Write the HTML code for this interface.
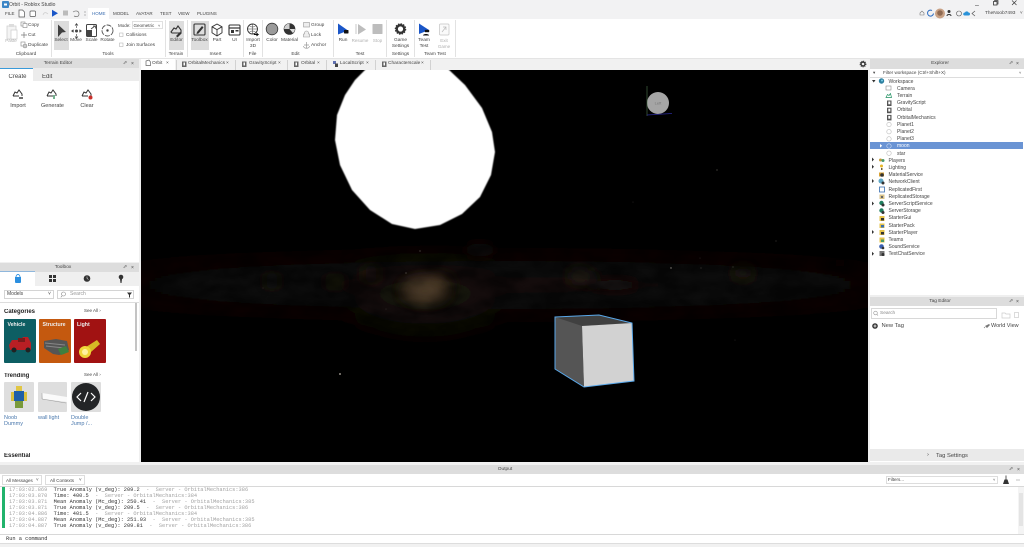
<!DOCTYPE html>
<html><head><meta charset="utf-8"><title>Orbit - Roblox Studio</title>
<style>
html,body{margin:0;padding:0;width:1024px;height:547px;overflow:hidden;background:#fff;font-family:"Liberation Sans",sans-serif;color:#333}
.a{position:absolute}
.t{position:absolute;white-space:nowrap;line-height:1;font-size:5px;color:#444;margin-top:1.500px;filter:blur(.25px)}
.c{transform:translateX(-50%)}
.d{color:#b0b0b0}
.m{font-family:"Liberation Mono",monospace;font-size:5.320px;color:#333;white-space:pre;margin-top:1px}
.g{color:#a2a2a2}
.b{background:#ddd}
.ln{color:#4a78ad;font-size:5.500px}
.h{font-weight:bold;font-size:6px;color:#222}
svg{position:absolute;overflow:visible}
</style></head><body>
<div class="a" style="left:0;top:0;width:1024px;height:19px;background:#f2f2f3"></div>
<svg style="left:2px;top:1px" width="8" height="8"><rect x="0" y="0" width="7" height="7" rx="1" fill="#3d86c6"/><rect x="2" y="2.500" width="3" height="2" fill="#fff"/></svg>
<div class="t" style="left:9px;top:1px">Orbit - Roblox Studio</div>
<div class="t" style="left:975px;top:0;font-size:7px">–</div>
<svg style="left:992px;top:0" width="8" height="7"><rect x="1.500" y="1.500" width="3.500" height="3.500" fill="none" stroke="#333" stroke-width=".8"/><path d="M2.500 1V.6H6V4H5.500" fill="none" stroke="#333" stroke-width=".7"/></svg>
<svg style="left:1011px;top:0" width="7" height="7"><path d="M1 .5L5.500 5M5.500 .5L1 5" stroke="#333" stroke-width=".7"/></svg>
<div class="t" style="left:5px;top:10px;font-size:4.500px">FILE</div>
<svg style="left:18px;top:9px" width="90" height="10">
<path d="M1 1h3.500l2 2v5H1z" fill="#fff" stroke="#555" stroke-width=".7"/>
<rect x="12" y="2" width="5.500" height="5.500" rx="1" fill="#fff" stroke="#555" stroke-width=".7"/>
<path d="M25 6c1-3 3-3 5-1" fill="none" stroke="#ccc" stroke-width=".7"/>
<path d="M34 .8L40 4.300L34 7.800z" fill="#1a56c8"/>
<rect x="45" y="1.500" width="5" height="5" fill="#bbb"/>
<path d="M55 3c3-2 6-1 6 2s-3 3-5 2" fill="none" stroke="#777" stroke-width=".7"/>
<path d="M66 3h2M66 6h2" stroke="#777" stroke-width=".6"/>
</svg>
<div class="a" style="left:88px;top:8px;width:21px;height:11px;background:#fff"></div>
<div class="t" style="left:92px;top:10px;font-size:4.500px;color:#3c6eb0">HOME</div>
<div class="t" style="left:113px;top:10px;font-size:4.500px">MODEL</div>
<div class="t" style="left:136px;top:10px;font-size:4.500px">AVATAR</div>
<div class="t" style="left:160px;top:10px;font-size:4.500px">TEST</div>
<div class="t" style="left:178px;top:10px;font-size:4.500px">VIEW</div>
<div class="t" style="left:197px;top:10px;font-size:4.500px">PLUGINS</div>
<svg style="left:918px;top:8px" width="60" height="11">
<path d="M2 5L4 3L6 5V7H2z" fill="none" stroke="#777" stroke-width=".6"/>
<path d="M14 2.500a3 3 0 1 0 1.500 3" fill="none" stroke="#2a6ac0" stroke-width="1"/>
<circle cx="22" cy="5.500" r="5" fill="#c8a185"/><circle cx="22" cy="5" r="2.800" fill="#8f6a52"/>
<circle cx="31" cy="3.500" r="1.500" fill="#333"/><path d="M29 8c0-2 4-2 4 0" fill="none" stroke="#333"/>
<circle cx="41" cy="5.500" r="2.500" fill="none" stroke="#555" stroke-width=".6"/>
<path d="M46.500 7.500a1.500 1.500 0 0 1 .5-3c.5-1.500 3-1.500 3.500 0a1.500 1.500 0 0 1 0 3z" fill="#2a92d8"/>
<path d="M57 3L54 5.500L57 8" fill="none" stroke="#555" stroke-width=".7"/>
</svg>
<div class="t" style="left:985px;top:10px;font-size:4.800px">TheNoob7493</div>
<div class="t" style="left:1020px;top:9.500px;font-size:4.500px">˅</div>

<!-- ribbon -->
<div class="a" style="left:0;top:19px;width:1024px;height:40px;background:#fff"></div>
<div class="a" style="left:0;top:58px;width:1024px;height:1px;background:#e4e4e4"></div>
<div class="a b" style="left:54px;top:21px;width:15px;height:29px"></div>
<div class="a b" style="left:169px;top:21px;width:15px;height:29px"></div>
<div class="a b" style="left:191px;top:21px;width:18px;height:29px"></div>
<svg style="left:0;top:19px" width="1024" height="40">
<g stroke="#e2e2e2" stroke-width="1"><path d="M51.500 1V38M165.500 1V38M187.500 1V38M243.500 1V38M262.500 1V38M333.500 1V38M386.500 1V38M414.500 1V38M455.500 1V38"/></g>
<!-- paste -->
<path d="M7 7h9v13h-9z" fill="#f4f4f4" stroke="#cfcfcf" stroke-width=".8"/><rect x="9" y="5" width="5" height="3" fill="#ddd"/><rect x="11" y="11" width="6" height="9" fill="#fff" stroke="#ccc" stroke-width=".7"/>
<!-- copy, cut, dup -->
<rect x="21" y="3" width="4" height="4" fill="#fff" stroke="#888" stroke-width=".6"/><rect x="23" y="4.500" width="4" height="4" fill="#fff" stroke="#888" stroke-width=".6"/>
<path d="M21 16h6M24 13v6" stroke="#777" stroke-width=".7"/>
<rect x="21" y="23" width="4" height="4" fill="#fff" stroke="#888" stroke-width=".6"/><circle cx="25" cy="27" r="2" fill="#ccc" stroke="#888" stroke-width=".5"/>
<!-- select -->
<path d="M58 5.500L66 13L62 13.500L58 18z" fill="#404040"/>
<!-- move -->
<g fill="#444"><path d="M76.500 4l1.800 2.500h-3.600zM76.500 20l1.800-2.500h-3.600zM71 12l2.500-1.800v3.600zM82 12l-2.500-1.800v3.600z"/><circle cx="76.500" cy="12" r="1.500"/></g>
<path d="M76.500 7v2M76.500 15v2M74 12h-1M80 12h-1" stroke="#555" stroke-width=".7"/>
<!-- scale -->
<rect x="86.500" y="5.500" width="10" height="12" rx="1" fill="#fff" stroke="#444" stroke-width="1"/><rect x="86.500" y="11" width="5.500" height="6.500" fill="#444"/><path d="M91 10L95 7M93 7h2.500v2.500" fill="none" stroke="#444" stroke-width=".8"/>
<!-- rotate -->
<circle cx="107.500" cy="11.500" r="5.500" fill="none" stroke="#555" stroke-width=".9" stroke-dasharray="5 1.200"/><circle cx="107.500" cy="11.500" r="1.200" fill="#444"/>
<!-- dropdown -->
<rect x="132.500" y="2.500" width="30" height="7" fill="#fff" stroke="#ccc" stroke-width=".6"/>
<rect x="119.500" y="14" width="3.500" height="3.500" fill="#fff" stroke="#aaa" stroke-width=".5"/><rect x="119.500" y="24" width="3.500" height="3.500" fill="#fff" stroke="#aaa" stroke-width=".5"/>
<!-- terrain -->
<path d="M171 13l3-4 2 1 2-3 3 4v3h-9z" fill="none" stroke="#333" stroke-width="1.100"/><path d="M176 17l4-4 1.500 1.500-4 4z" fill="#333"/>
<!-- toolbox -->
<rect x="194" y="5" width="11" height="11" rx="1" fill="none" stroke="#333" stroke-width="1.100"/><path d="M197 13l5-6 1.500 1.500-5 6-2 .5z" fill="#333"/>
<!-- part -->
<path d="M217 5l5 2.800v6L217 17l-5-3.200v-6zM212 7.800l5 2.800 5-2.800M217 10.600V17" fill="none" stroke="#333" stroke-width=".9"/>
<!-- UI -->
<rect x="229" y="6" width="11" height="10" rx="1" fill="none" stroke="#333" stroke-width="1.100"/><path d="M229 9h11" stroke="#333" stroke-width="1.200"/><rect x="231" y="11" width="3" height="3" fill="#333"/><rect x="235.500" y="11" width="3" height="1.500" fill="#333"/>
<!-- import -->
<circle cx="252.500" cy="10" r="5" fill="none" stroke="#333" stroke-width=".9"/><path d="M247.500 10h10M252.500 5v10M249 6.500c2 2 5 2 7 0M249 13.500c2-2 5-2 7 0" fill="none" stroke="#333" stroke-width=".5"/><path d="M254 15.500h4l-1.500-1.500M258 15.500l-1.500 1.500" stroke="#111" stroke-width="1" fill="none"/>
<!-- color -->
<circle cx="272" cy="10" r="5.800" fill="#9a9a9a" stroke="#333" stroke-width=".8"/>
<!-- material -->
<circle cx="289.500" cy="10" r="5.800" fill="#333"/><path d="M289.500 10V4.600a5.500 5.500 0 0 0-5.400 5.400z" fill="#d0d0d0"/><path d="M289.500 10h5.400a5.500 5.500 0 0 1-2 4z" fill="#ddd"/>
<!-- group etc -->
<rect x="303.500" y="3.500" width="6" height="4.500" fill="#eee" stroke="#999" stroke-width=".6"/>
<path d="M306.500 12a2 2 0 0 1 2 2v1h1v3h-6v-3h1v-1a2 2 0 0 1 2-2z" fill="#eee" stroke="#999" stroke-width=".6"/>
<path d="M306.500 23v6M304 26h5M303.500 27c0 3 6 3 6 0" fill="none" stroke="#999" stroke-width=".7"/>
<!-- run -->
<path d="M338 4.500L348 11.500L338 15.500z" fill="#1a56c8"/><rect x="344" y="11" width="4.500" height="3.500" rx=".6" fill="#111"/>
<path d="M356 5v10" stroke="#bbb" stroke-width=".8"/><path d="M358 5L366 10.500L358 15.500z" fill="#bdbdbd"/>
<rect x="372.500" y="5" width="10" height="10" rx=".5" fill="#bdbdbd"/>
<!-- settings -->
<circle cx="400.500" cy="10" r="3.800" fill="none" stroke="#333" stroke-width="2.400"/><circle cx="400.500" cy="10" r="5" fill="none" stroke="#333" stroke-width="1.500" stroke-dasharray="1.500 1.100"/>
<!-- team test -->
<path d="M419 4.500L429 11L419 15z" fill="#1a56c8"/><circle cx="426" cy="12" r="1.300" fill="#111"/><path d="M423 16.500c0-2 6-2 6 0z" fill="#111"/><circle cx="428" cy="12" r="1.300" fill="#111"/>
<rect x="439.500" y="5" width="9.500" height="11" rx="1" fill="#fafafa" stroke="#c4c4c4" stroke-width=".7"/><path d="M442 13l4-5M443 8h3v3" stroke="#bbb" stroke-width=".7" fill="none"/>
</svg>
<div class="t" style="left:28px;top:22.500px;font-size:4.800px">Copy</div>
<div class="t" style="left:28px;top:32.500px;font-size:4.800px">Cut</div>
<div class="t" style="left:28px;top:42.500px;font-size:4.800px">Duplicate</div>
<div class="t d c" style="left:11px;top:37.500px;font-size:4.500px">Paste</div>
<div class="t c" style="left:61px;top:37.500px;font-size:4.800px">Select</div>
<div class="t c" style="left:76px;top:37.500px;font-size:4.800px">Move</div>
<div class="t c" style="left:91.500px;top:37.500px;font-size:4.800px">Scale</div>
<div class="t c" style="left:107.500px;top:37.500px;font-size:4.800px">Rotate</div>
<div class="t" style="left:118px;top:22.500px;font-size:4.500px">Mode:</div>
<div class="t" style="left:133.500px;top:22.500px;font-size:4.500px">Geometric</div>
<div class="t" style="left:158px;top:22px;font-size:4px">˅</div>
<div class="t" style="left:126px;top:32.500px;font-size:4.800px">Collisions</div>
<div class="t" style="left:126px;top:42.500px;font-size:4.800px">Join Surfaces</div>
<div class="t c" style="left:176.500px;top:37.500px;font-size:4.800px">Editor</div>
<div class="t c" style="left:199.500px;top:37.500px;font-size:4.800px">Toolbox</div>
<div class="t c" style="left:217px;top:37.500px;font-size:4.800px">Part</div>
<div class="t c" style="left:234.500px;top:37.500px;font-size:4.800px">UI</div>
<div class="t c" style="left:253px;top:37.500px;font-size:4.800px">Import</div>
<div class="t c" style="left:253px;top:43.500px;font-size:4.800px">3D</div>
<div class="t c" style="left:272px;top:37.500px;font-size:4.800px">Color</div>
<div class="t c" style="left:289.500px;top:37.500px;font-size:4.800px">Material</div>
<div class="t" style="left:311px;top:22.500px;font-size:4.800px">Group</div>
<div class="t" style="left:311px;top:32.500px;font-size:4.800px">Lock</div>
<div class="t" style="left:311px;top:42.500px;font-size:4.800px">Anchor</div>
<div class="t c" style="left:343px;top:37.500px;font-size:4.800px">Run</div>
<div class="t d c" style="left:360px;top:37.500px;font-size:4.500px">Resume</div>
<div class="t d c" style="left:377.500px;top:37.500px;font-size:4.500px">Stop</div>
<div class="t c" style="left:400.500px;top:37.500px;font-size:4.800px">Game</div>
<div class="t c" style="left:400.500px;top:43.500px;font-size:4.800px">Settings</div>
<div class="t c" style="left:424px;top:37.500px;font-size:4.800px">Team</div>
<div class="t c" style="left:424px;top:43.500px;font-size:4.800px">Test</div>
<div class="t d c" style="left:444px;top:37.500px;font-size:4.500px">Exit</div>
<div class="t d c" style="left:444px;top:43.500px;font-size:4.500px">Game</div>
<div class="t c" style="left:26px;top:51.500px;font-size:4.800px">Clipboard</div>
<div class="t c" style="left:108px;top:51.500px;font-size:4.800px">Tools</div>
<div class="t c" style="left:176px;top:51.500px;font-size:4.800px">Terrain</div>
<div class="t c" style="left:215.500px;top:51.500px;font-size:4.800px">Insert</div>
<div class="t c" style="left:252.500px;top:51.500px;font-size:4.800px">File</div>
<div class="t c" style="left:295.500px;top:51.500px;font-size:4.800px">Edit</div>
<div class="t c" style="left:360px;top:51.500px;font-size:4.800px">Test</div>
<div class="t c" style="left:400.500px;top:51.500px;font-size:4.800px">Settings</div>
<div class="t c" style="left:435px;top:51.500px;font-size:4.800px">Team Test</div>

<!-- doc tabs -->
<div class="a" style="left:140px;top:59px;width:729px;height:11px;background:#f1f1f1"></div>
<div class="a" style="left:141px;top:59px;width:34px;height:11px;background:#fff"></div>
<div class="a" style="left:235px;top:60px;width:1px;height:10px;background:#d2d2d2"></div>
<div class="a" style="left:176px;top:60px;width:1px;height:10px;background:#d2d2d2"></div>
<div class="a" style="left:287px;top:60px;width:1px;height:10px;background:#d2d2d2"></div>
<div class="a" style="left:326px;top:60px;width:1px;height:10px;background:#d2d2d2"></div>
<div class="a" style="left:375px;top:60px;width:1px;height:10px;background:#d2d2d2"></div>
<div class="a" style="left:430px;top:60px;width:1px;height:10px;background:#d2d2d2"></div>
<svg style="left:141px;top:59px" width="300" height="11">
<path d="M5 2l3-1 1.500 2v3.500H5z" fill="#fff" stroke="#666" stroke-width=".7"/>
<rect x="41" y="2.500" width="4.500" height="5.500" fill="#666"/><rect x="42.500" y="3.500" width="1.500" height="3" fill="#fff"/>
<rect x="101" y="2.500" width="4.500" height="5.500" fill="#666"/><rect x="102.500" y="3.500" width="1.500" height="3" fill="#fff"/>
<rect x="153" y="2.500" width="4.500" height="5.500" fill="#666"/><rect x="154.500" y="3.500" width="1.500" height="3" fill="#fff"/>
<path d="M192 2h3v3h-3z" fill="#5f6fb0"/><rect x="194" y="4.500" width="3" height="3.500" fill="#444"/>
<rect x="241" y="2.500" width="4.500" height="5.500" fill="#666"/><rect x="242.500" y="3.500" width="1.500" height="3" fill="#fff"/>
</svg>
<div class="t" style="left:152px;top:60.500px;font-size:4.800px">Orbit</div>
<div class="t" style="left:188px;top:60.500px;font-size:4.800px">OrbitalMechanics</div>
<div class="t" style="left:249px;top:60.500px;font-size:4.800px">GravityScript</div>
<div class="t" style="left:301px;top:60.500px;font-size:4.800px">Orbital</div>
<div class="t" style="left:340px;top:60.500px;font-size:4.800px">LocalScript</div>
<div class="t" style="left:388px;top:60.500px;font-size:4.800px">Characterscale</div>
<div class="t" style="left:166px;top:60.500px;font-size:4.800px">×</div>
<div class="t" style="left:226px;top:60.500px;font-size:4.800px">×</div>
<div class="t" style="left:278px;top:60.500px;font-size:4.800px">×</div>
<div class="t" style="left:317px;top:60.500px;font-size:4.800px">×</div>
<div class="t" style="left:366px;top:60.500px;font-size:4.800px">×</div>
<div class="t" style="left:421px;top:60.500px;font-size:4.800px">×</div>
<svg style="left:858px;top:60px" width="10" height="9"><circle cx="5" cy="4" r="2" fill="none" stroke="#333" stroke-width="1.400"/><circle cx="5" cy="4" r="3" fill="none" stroke="#333" stroke-width=".8" stroke-dasharray="1 1"/></svg>

<!-- viewport -->
<div class="a" style="left:139px;top:59px;width:2px;height:405px;background:#f0f0f0"></div>
<svg style="left:141px;top:70px;background:#000;overflow:hidden" width="727" height="392" viewBox="141 70 727 392">
<defs>
<filter id="bl" filterUnits="userSpaceOnUse" x="0" y="120" width="1024" height="340"><feGaussianBlur stdDeviation="20"/></filter>
<filter id="bs" filterUnits="userSpaceOnUse" x="0" y="150" width="1024" height="300"><feGaussianBlur stdDeviation="7"/></filter>
<filter id="e" x="-5%" y="-5%" width="110%" height="110%"><feGaussianBlur stdDeviation=".5"/></filter>
<filter id="n" filterUnits="userSpaceOnUse" x="141" y="215" width="727" height="135"><feTurbulence type="fractalNoise" baseFrequency=".035 .07" numOctaves="3" seed="7"/><feColorMatrix type="matrix" values="0 0 0 0 0  0 0 0 0 0  0 0 0 0 0  3 0 0 0 -1"/><feGaussianBlur stdDeviation="1"/></filter>
</defs>
<g filter="url(#bl)">
<ellipse cx="500" cy="285" rx="420" ry="24" fill="#120e0a"/>
<ellipse cx="425" cy="298" rx="70" ry="26" fill="#1f1711"/>
</g>
<g filter="url(#bs)">
<ellipse cx="425" cy="290" rx="24" ry="10" fill="#4d3b28"/>
<ellipse cx="440" cy="282" rx="12" ry="6" fill="#3d2e1f"/>
<ellipse cx="371" cy="274" rx="10" ry="5" fill="#2a2015"/>
<ellipse cx="580" cy="276" rx="13" ry="6" fill="#2c2116"/>
<ellipse cx="743" cy="273" rx="12" ry="6" fill="#231a11"/>
<ellipse cx="272" cy="281" rx="10" ry="5" fill="#221a14"/>
<ellipse cx="335" cy="282" rx="14" ry="5" fill="#1e170f"/>
<ellipse cx="480" cy="250" rx="18" ry="7" fill="#120c07"/>
<ellipse cx="840" cy="263" rx="18" ry="5" fill="#100c09"/>
<ellipse cx="615" cy="285" rx="28" ry="6" fill="#16100b"/>
</g>
<rect x="141" y="215" width="727" height="135" filter="url(#n)" opacity=".5"/>
<ellipse cx="425" cy="291" rx="20" ry="9" fill="#5a4630" opacity=".85" filter="url(#bs)"/>
<g fill="#8f8982">
<circle cx="340" cy="374" r="1"/><circle cx="671" cy="268" r=".7"/><circle cx="420" cy="251" r=".5"/>
<circle cx="406" cy="273" r=".5"/><circle cx="701" cy="268" r=".4"/><circle cx="717" cy="170" r=".5"/>
<circle cx="733" cy="267" r=".4"/><circle cx="776" cy="241" r=".4"/><circle cx="700" cy="258" r=".3"/>
<circle cx="386" cy="309" r=".3"/><circle cx="263" cy="288" r=".3"/><circle cx="633" cy="202" r=".3"/>
<circle cx="735" cy="340" r=".3"/><circle cx="627" cy="324" r=".3"/>
</g>
<polygon filter="url(#e)" points="367,68 447,68 465,85 482,108 492,132 495,152 491,175 480,197 462,214 440,225 415,229 392,224 370,210 352,190 340,165 335,140 337,115 345,95 355,80" fill="#fff"/>
<polygon points="555,317 599,315 632,323 582,326 584,387 555,369" fill="#555"/>
<polygon points="555,317 599,315 632,323 582,326" fill="#404040"/>
<polygon points="582,326 632,323 634,381 584,387" fill="#d2d2d2"/>
<polygon points="555,317 599,315 632,323 634,381 584,387 555,369" fill="none" stroke="#5aa8ea" stroke-width="1"/>
<circle cx="656" cy="104" r="8" fill="#555"/>
<circle cx="658" cy="103" r="11" fill="#a5a5a5"/>
<text x="658" y="104.500" font-size="4" fill="#777" text-anchor="middle" font-family="Liberation Sans">Left</text>
<path d="M647 86V116" stroke="#4f7a4f" stroke-width=".6"/>
<path d="M647 115L672 113.500" stroke="#2a2a9a" stroke-width=".7"/>
</svg>
<div class="a" style="left:868px;top:59px;width:2px;height:405px;background:#f0f0f0"></div>

<!-- terrain panel -->
<div class="a b" style="left:0;top:59px;width:139px;height:9px"></div>
<div class="t c" style="left:58px;top:60.500px;font-size:4.800px">Terrain Editor</div>
<div class="t" style="left:123px;top:60px;font-size:4.800px">⬀</div>
<div class="t" style="left:131px;top:60px;font-size:5px">×</div>
<div class="a" style="left:0;top:68px;width:139px;height:13px;background:#ececec"></div>
<div class="a" style="left:0;top:68px;width:33px;height:13px;background:#fff"></div>
<div class="a" style="left:0;top:68px;width:33px;height:1px;background:#3a9ad9"></div>
<div class="t" style="left:8.500px;top:72px;font-size:6px">Create</div>
<div class="t" style="left:42px;top:72px;font-size:6px">Edit</div>
<svg style="left:0;top:88px" width="100" height="14">
<path d="M13 8l2-4 2 1 2-3 3 4v2" fill="none" stroke="#333" stroke-width="1"/><path d="M13 8h6" stroke="#333"/><path d="M19 10h4" stroke="#222" stroke-width="1.300"/>
<path d="M47 8l2-4 2 1 2-3 3 4v2" fill="none" stroke="#333" stroke-width="1"/><path d="M47 8h6" stroke="#333"/><path d="M54 7v4" stroke="#2d8a55" stroke-width="1.300"/>
<path d="M82 8l2-4 2 1 2-3 3 4v2" fill="none" stroke="#333" stroke-width="1"/><path d="M82 8h6" stroke="#333"/><circle cx="90.500" cy="9.500" r="2" fill="#c9302c"/>
</svg>
<div class="t c" style="left:18px;top:102.500px;font-size:5.500px">Import</div>
<div class="t c" style="left:52.500px;top:102.500px;font-size:5.500px">Generate</div>
<div class="t c" style="left:87px;top:102.500px;font-size:5.500px">Clear</div>

<!-- toolbox -->
<div class="a" style="left:0;top:262px;width:139px;height:2px;background:#f0f0f0"></div>
<div class="a b" style="left:0;top:263px;width:139px;height:9px"></div>
<div class="t c" style="left:63px;top:264px;font-size:4.800px">Toolbox</div>
<div class="t" style="left:123px;top:264px;font-size:4.800px">⬀</div>
<div class="t" style="left:131px;top:264px;font-size:5px">×</div>
<div class="a" style="left:0;top:272px;width:139px;height:14px;background:#efefef"></div>
<div class="a" style="left:0;top:271px;width:35px;height:15px;background:#fff;border-top:1px solid #8fb7dc;box-sizing:border-box"></div>
<svg style="left:0;top:272px" width="139" height="13">
<path d="M15 5h6v5a1 1 0 0 1-1 1h-4a1 1 0 0 1-1-1z" fill="#2b8fe0"/><path d="M16 5a2 2.500 0 0 1 4 0" fill="none" stroke="#2b8fe0" stroke-width=".9"/>
<g fill="#333"><rect x="49" y="3" width="3" height="3"/><rect x="53" y="3" width="3" height="3"/><rect x="49" y="7" width="3" height="3"/><rect x="53" y="7" width="3" height="3"/></g>
<circle cx="87" cy="6.500" r="3.300" fill="#333"/><path d="M87 4.500v2l1.500 1" stroke="#fff" stroke-width=".5" fill="none"/>
<circle cx="121" cy="5" r="2.300" fill="#333"/><path d="M120 7h2l-.5 4h-1z" fill="#333"/>
</svg>
<div class="a" style="left:4px;top:290px;width:50px;height:9px;box-sizing:border-box;border:1px solid #d4d4d4;background:#fff"></div>
<div class="t" style="left:7px;top:290.500px;font-size:5px">Models</div>
<div class="t" style="left:48px;top:290px;font-size:5px">˅</div>
<div class="a" style="left:57px;top:290px;width:77px;height:9px;box-sizing:border-box;border:1px solid #d4d4d4;background:#fff"></div>
<svg style="left:60px;top:291px" width="76" height="8"><circle cx="3.500" cy="3" r="2" fill="none" stroke="#888" stroke-width=".6"/><path d="M2 5L.8 6.300" stroke="#888" stroke-width=".6"/><path d="M67 1.500h5L70 4v2.500h-1V4z" fill="#333"/></svg>
<div class="t" style="left:70px;top:290.800px;font-size:5px;color:#999">Search</div>
<div class="a" style="left:0;top:302px;width:139px;height:1px;background:#ddd"></div>
<div class="t h" style="left:4px;top:307px">Categories</div>
<div class="t" style="left:84px;top:307.500px;font-size:4.500px">See All ›</div>
<div class="a" style="left:4px;top:319px;width:32px;height:44px;background:#0d5e63;border-radius:1px"></div>
<div class="a" style="left:39px;top:319px;width:32px;height:44px;background:#c4590f;border-radius:1px"></div>
<div class="a" style="left:74px;top:319px;width:32px;height:44px;background:#a11212;border-radius:1px"></div>
<div class="t" style="left:7.500px;top:321.500px;font-size:5.200px;font-weight:bold;color:#eee">Vehicle</div>
<div class="t" style="left:42.500px;top:321.500px;font-size:5.200px;font-weight:bold;color:#eee">Structure</div>
<div class="t" style="left:77px;top:321.500px;font-size:5.200px;font-weight:bold;color:#eee">Light</div>
<svg style="left:0;top:319px" width="110" height="44">
<path d="M9 26l3-5h9l2-3h5l3 6v7H10z" fill="#b81f24"/><rect x="18" y="19" width="7" height="4" fill="#7a1a1a"/><circle cx="14" cy="31" r="2.500" fill="#222"/><circle cx="28" cy="31" r="2.500" fill="#222"/>
<path d="M44 22l12-2 11 2 2 9-5 4-5 1-6-1-9-6z" fill="#555"/><path d="M45 24l20 2M46 27l18 2" stroke="#888" stroke-width="1"/><path d="M58 30l8-3 3 6-8 3z" fill="#3f7f3f"/>
<path d="M86 28l11-7 3 4-9 8z" fill="#d6ba25"/><circle cx="85" cy="33" r="6" fill="#f0d73a"/><circle cx="85" cy="33" r="3" fill="#fff3a0"/>
</svg>
<div class="t h" style="left:4px;top:371px">Trending</div>
<div class="t" style="left:84px;top:371px;font-size:4.500px">See All ›</div>
<div class="a" style="left:4px;top:382px;width:30px;height:30px;background:#dedede;border-radius:1px"></div>
<div class="a" style="left:38px;top:382px;width:29px;height:30px;background:#dedede;border-radius:1px"></div>
<div class="a" style="left:71px;top:382px;width:30px;height:30px;background:#dedede;border-radius:1px"></div>
<svg style="left:0;top:382px" width="105" height="30">
<rect x="16" y="4" width="6" height="5" fill="#e1c644"/><rect x="14" y="9" width="10" height="10" fill="#1f5fa8"/><rect x="11" y="10" width="3" height="9" fill="#d9bf3f"/><rect x="24" y="10" width="3" height="9" fill="#d9bf3f"/><rect x="15" y="19" width="8" height="7" fill="#7a9a3a"/>
<path d="M42 11l25 4v5l-24-3z" fill="#fafafa"/><path d="M42 11v6l24 4" stroke="#999" stroke-width=".5" fill="none"/>
<circle cx="86" cy="15" r="14" fill="#232527"/><path d="M81 11l-4 4 4 4M91 11l4 4-4 4M88 10l-4 10" stroke="#fff" stroke-width="1.200" fill="none"/>
</svg>
<div class="t ln" style="left:4px;top:414px">Noob</div>
<div class="t ln" style="left:4px;top:420.500px">Dummy</div>
<div class="t ln" style="left:38px;top:414px">wall light</div>
<div class="t ln" style="left:71px;top:414px">Double</div>
<div class="t ln" style="left:71px;top:420.500px">Jump /...</div>
<div class="t h" style="left:4px;top:451px">Essential</div>
<div class="a" style="left:135px;top:303px;width:2px;height:48px;background:#c4c4c4"></div>
<div class="a" style="left:72px;top:461.500px;width:28px;height:1px;background:#bbb"></div>
<div class="a" style="left:0;top:462px;width:139px;height:2px;background:#e0e0e0"></div>

<!-- explorer -->
<div class="a b" style="left:870px;top:59px;width:154px;height:10px"></div>
<div class="t c" style="left:940px;top:60.500px;font-size:4.800px">Explorer</div>
<div class="t" style="left:1009px;top:60.500px;font-size:4.800px">⬀</div>
<div class="t" style="left:1016px;top:60.500px;font-size:5px">×</div>
<div class="a" style="left:870px;top:77px;width:154px;height:1px;background:#ddd"></div>
<div class="t" style="left:873px;top:69px;font-size:4.500px">▾</div>
<div class="t" style="left:883px;top:69.500px;font-size:4.600px">Filter workspace (Ctrl+Shift+X)</div>
<div class="t" style="left:1019px;top:69px;font-size:4px">˅</div>
<div class="a" style="left:870px;top:142px;width:153px;height:7.200px;background:#6a94d4"></div>
<svg style="left:870px;top:78px" width="40" height="180">
<g fill="#333"><path d="M2 2l3.500 0-1.750 2.500zM2 79.500l2 2-2 2zM2 86.700l2 2-2 2zM2 101l2 2-2 2zM2 123.500l2 2-2 2zM2 152l2 2-2 2zM2 173.700l2 2-2 2z"/></g>
<path d="M10 66l2.200 1.800-2.200 1.800z" fill="#fff"/>
<circle cx="11.500" cy="3" r="2.700" fill="#2c7f9f"/><circle cx="12" cy="2.500" r="1" fill="#7acde8"/>
<rect x="16" y="8" width="5" height="4" fill="#fff" stroke="#777" stroke-width=".5"/>
<path d="M16 19.500l1.500-3 1.500 1 1.500-2 1 4z" fill="none" stroke="#1e8f5f" stroke-width=".7"/>
<g fill="#555"><rect x="17" y="22.500" width="4.500" height="5.500"/><rect x="17" y="29.700" width="4.500" height="5.500"/><rect x="17" y="36.900" width="4.500" height="5.500"/></g>
<g fill="#fff"><rect x="18.300" y="23.500" width="2" height="2.800"/><rect x="18.300" y="30.700" width="2" height="2.800"/><rect x="18.300" y="37.900" width="2" height="2.800"/></g>
<g fill="none" stroke="#bbb" stroke-width=".6"><circle cx="19" cy="46.500" r="2.200"/><circle cx="19" cy="53.700" r="2.200"/><circle cx="19" cy="60.900" r="2.200"/><circle cx="19" cy="68" r="2.200" stroke="#cfdcf3"/><circle cx="19" cy="75.200" r="2.200"/></g>
<circle cx="10.500" cy="82" r="1.500" fill="#c49a3a"/><circle cx="13" cy="82.500" r="1.500" fill="#4a9a6a"/>
<circle cx="11.500" cy="88" r="1.500" fill="#e8b82a"/><rect x="11" y="90" width="1.500" height="2" fill="#6e5f38"/>
<rect x="9" y="94.500" width="5" height="4" fill="#d9a132"/><circle cx="12" cy="97" r="1.800" fill="#333"/>
<circle cx="11" cy="103" r="2.500" fill="#5fa7c5"/><circle cx="13" cy="105" r="1.500" fill="#333"/>
<rect x="9.500" y="109" width="5" height="5" fill="none" stroke="#3a6fb0" stroke-width=".8"/>
<rect x="9.500" y="116.500" width="5" height="4.500" fill="#d9c38a"/><rect x="11" y="118" width="2" height="2" fill="#666"/>
<circle cx="11.500" cy="125" r="2.200" fill="#1f7f5f"/><circle cx="13" cy="127" r="1.500" fill="#333"/>
<circle cx="11.500" cy="132.500" r="2.200" fill="#1f7f5f"/><circle cx="13" cy="134.500" r="1.500" fill="#333"/>
<rect x="9.500" y="138" width="5" height="5" fill="#e6c34a"/><rect x="11" y="140" width="3" height="2.500" fill="#333"/>
<rect x="9.500" y="145.500" width="5" height="4.500" fill="#e6c34a"/><rect x="11" y="147" width="3" height="2.500" fill="#3a6fb0"/>
<rect x="9.500" y="152" width="5" height="5" fill="#e6c34a"/><rect x="11" y="154" width="3" height="2.500" fill="#333"/>
<rect x="9.500" y="159.500" width="5" height="5" fill="#e6c34a"/><rect x="11" y="161.500" width="3" height="2.500" fill="#4a9a6a"/>
<circle cx="11.500" cy="168.500" r="2.300" fill="#3a5fb0"/><circle cx="13" cy="170" r="1.300" fill="#333"/>
<rect x="9.500" y="173" width="5" height="5" fill="#777"/><circle cx="13" cy="176.500" r="1.500" fill="#333"/>
</svg>
<div class="t" style="left:888.500px;top:78px">Workspace</div>
<div class="t" style="left:897px;top:85.300px">Camera</div>
<div class="t" style="left:897px;top:92.500px">Terrain</div>
<div class="t" style="left:897px;top:99.700px">GravityScript</div>
<div class="t" style="left:897px;top:106.900px">Orbital</div>
<div class="t" style="left:897px;top:114.100px">OrbitalMechanics</div>
<div class="t" style="left:897px;top:121.300px">Planet1</div>
<div class="t" style="left:897px;top:128.500px">Planet2</div>
<div class="t" style="left:897px;top:135.700px">Planet3</div>
<div class="t" style="left:897px;top:142.900px;color:#fff">moon</div>
<div class="t" style="left:897px;top:150.100px">star</div>
<div class="t" style="left:888.500px;top:157.300px">Players</div>
<div class="t" style="left:888.500px;top:164.500px">Lighting</div>
<div class="t" style="left:888.500px;top:171.700px">MaterialService</div>
<div class="t" style="left:888.500px;top:178.900px">NetworkClient</div>
<div class="t" style="left:888.500px;top:186.100px">ReplicatedFirst</div>
<div class="t" style="left:888.500px;top:193.300px">ReplicatedStorage</div>
<div class="t" style="left:888.500px;top:200.500px">ServerScriptService</div>
<div class="t" style="left:888.500px;top:207.700px">ServerStorage</div>
<div class="t" style="left:888.500px;top:214.900px">StarterGui</div>
<div class="t" style="left:888.500px;top:222.100px">StarterPack</div>
<div class="t" style="left:888.500px;top:229.300px">StarterPlayer</div>
<div class="t" style="left:888.500px;top:236.500px">Teams</div>
<div class="t" style="left:888.500px;top:243.700px">SoundService</div>
<div class="t" style="left:888.500px;top:250.900px">TextChatService</div>

<!-- tag editor -->
<div class="a" style="left:870px;top:295px;width:154px;height:2px;background:#efefef"></div>
<div class="a b" style="left:870px;top:297px;width:154px;height:9px"></div>
<div class="t c" style="left:940px;top:298.500px;font-size:4.800px">Tag Editor</div>
<div class="t" style="left:1009px;top:298.500px;font-size:4.800px">⬀</div>
<div class="t" style="left:1016px;top:298.500px;font-size:5px">×</div>
<div class="a" style="left:871px;top:308px;width:126px;height:11px;box-sizing:border-box;border:1px solid #d8d8d8;background:#fff"></div>
<svg style="left:873px;top:310px" width="150" height="20">
<circle cx="2.500" cy="3" r="1.800" fill="none" stroke="#999" stroke-width=".6"/><path d="M4 4.500l1 1" stroke="#999" stroke-width=".6"/>
<path d="M129 3h3l1 1h4v4h-8z" fill="none" stroke="#ccc" stroke-width=".7"/>
<rect x="141.500" y="2.500" width="4" height="5" fill="none" stroke="#ccc" stroke-width=".7"/>
<circle cx="2" cy="16" r="2.800" fill="#333"/><path d="M2 14.500v3M.5 16h3" stroke="#fff" stroke-width=".8"/>
<path d="M112 16l4-2 1 1-3 3z" fill="#777"/><path d="M111 18l1-1" stroke="#777" stroke-width=".6"/>
</svg>
<div class="t" style="left:880px;top:310.500px;font-size:4.800px;color:#888">Search</div>
<div class="t" style="left:881.500px;top:322.500px;font-size:5.800px">New Tag</div>
<div class="t" style="left:991px;top:322.500px;font-size:5.500px">World View</div>
<div class="a" style="left:870px;top:449px;width:154px;height:12px;background:#eaeaea"></div>
<div class="t" style="left:927px;top:451.500px;font-size:5.800px">›</div>
<div class="t" style="left:936px;top:452px;font-size:5.800px">Tag Settings</div>
<div class="a" style="left:870px;top:461px;width:154px;height:3px;background:#fff"></div>

<!-- output -->
<div class="a" style="left:0;top:462px;width:1024px;height:3px;background:#f1f1f1"></div>
<div class="a b" style="left:0;top:465px;width:1024px;height:9px"></div>
<div class="t c" style="left:505px;top:466.500px;font-size:4.800px">Output</div>
<div class="t" style="left:1009px;top:466.500px;font-size:4.800px">⬀</div>
<div class="t" style="left:1017px;top:466.500px;font-size:5px">×</div>
<div class="a" style="left:2px;top:475px;width:40px;height:10px;box-sizing:border-box;border:1px solid #ddd;background:#fff"></div>
<div class="t" style="left:6px;top:477px;font-size:4.500px">All Messages</div>
<div class="t" style="left:36px;top:476.500px;font-size:4.500px">˅</div>
<div class="a" style="left:45px;top:475px;width:40px;height:10px;box-sizing:border-box;border:1px solid #ddd;background:#fff"></div>
<div class="t" style="left:50px;top:477px;font-size:4.500px">All Contexts</div>
<div class="t" style="left:79px;top:476.500px;font-size:4.500px">˅</div>
<div class="a" style="left:886px;top:476px;width:112px;height:8px;box-sizing:border-box;border:1px solid #ddd;background:#fff"></div>
<div class="t" style="left:888px;top:476.500px;font-size:4.500px">Filters...</div>
<div class="t" style="left:993px;top:476px;font-size:4px">˅</div>
<svg style="left:1002px;top:475px" width="22" height="11"><path d="M4 .5v4" stroke="#333" stroke-width=".8"/><path d="M2.500 4.500h3L7 9H1z" fill="#333"/><path d="M14 5h4" stroke="#aaa" stroke-width=".7"/></svg>
<div class="a" style="left:0;top:486px;width:1024px;height:1px;background:#d8d8d8"></div>
<div class="a" style="left:2px;top:487px;width:3px;height:41px;background:#21b36c"></div>
<div class="t m" style="left:9px;top:486.800px"><span class="g">17:03:02.869</span>  True Anomaly (v_deg): 209.2  <span class="g">-  Server - OrbitalMechanics:386</span></div>
<div class="t m" style="left:9px;top:492.800px"><span class="g">17:03:03.870</span>  Time: 400.5  <span class="g">-  Server - OrbitalMechanics:384</span></div>
<div class="t m" style="left:9px;top:498.800px"><span class="g">17:03:03.871</span>  Mean Anomaly (Mc_deg): 250.41  <span class="g">-  Server - OrbitalMechanics:385</span></div>
<div class="t m" style="left:9px;top:504.800px"><span class="g">17:03:03.871</span>  True Anomaly (v_deg): 209.5  <span class="g">-  Server - OrbitalMechanics:386</span></div>
<div class="t m" style="left:9px;top:510.800px"><span class="g">17:03:04.886</span>  Time: 401.5  <span class="g">-  Server - OrbitalMechanics:384</span></div>
<div class="t m" style="left:9px;top:516.800px"><span class="g">17:03:04.887</span>  Mean Anomaly (Mc_deg): 251.03  <span class="g">-  Server - OrbitalMechanics:385</span></div>
<div class="t m" style="left:9px;top:522.800px"><span class="g">17:03:04.887</span>  True Anomaly (v_deg): 209.81  <span class="g">-  Server - OrbitalMechanics:386</span></div>
<div class="a" style="left:1018px;top:487px;width:6px;height:47px;background:#f4f4f4"></div>
<div class="a" style="left:1019px;top:493px;width:4px;height:33px;background:#e4e4e4"></div>
<div class="a" style="left:0;top:534px;width:1024px;height:1px;background:#d8d8d8"></div>
<div class="t m" style="left:6px;top:536px">Run a command</div>
<div class="a" style="left:0;top:543px;width:1024px;height:1px;background:#ddd"></div>
<div class="a" style="left:0;top:544px;width:1024px;height:3px;background:#f1f1f1"></div>
</body></html>
